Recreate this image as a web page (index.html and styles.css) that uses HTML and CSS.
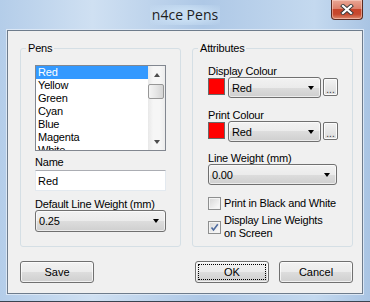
FILE: index.html
```html
<!DOCTYPE html>
<html lang="en">
<head>
  <meta charset="UTF-8">
  <title>n4ce Pens</title>
  <link rel="stylesheet" href="styles.css">
</head>
<body>
  <div class="window">
    <div class="titlebar">
      <span></span>
      <span class="title">n4ce Pens</span>
      <button class="close" aria-label="Close">
        <svg width="14" height="11" viewBox="0 0 14 11">
          <path d="M3 2 L11 9 M11 2 L3 9" stroke="#3a3a3a" stroke-width="4" stroke-linecap="square"/>
          <path d="M3 2 L11 9 M11 2 L3 9" stroke="#fff" stroke-width="2.2" stroke-linecap="square"/>
        </svg>
      </button>
    </div>

    <div class="client">
      <div class="groups">
        <fieldset class="group pens">
          <legend>Pens</legend>
          <div class="listbox">
            <ul class="items">
              <li class="selected">Red</li>
              <li>Yellow</li>
              <li>Green</li>
              <li>Cyan</li>
              <li>Blue</li>
              <li>Magenta</li>
              <li>White</li>
            </ul>
            <div class="scrollbar">
              <span class="sb-btn"><span class="tri up"></span></span>
              <span class="thumb"></span>
              <span class="sb-track"></span>
              <span class="sb-btn"><span class="tri down"></span></span>
            </div>
          </div>
          <div class="label name-label">Name</div>
          <input class="textbox" type="text" value="Red">
          <div class="label weight-label">Default Line Weight (mm)</div>
          <div class="combo wide"><span>0.25</span><span class="caret"></span></div>
        </fieldset>

        <fieldset class="group attributes">
          <legend>Attributes</legend>
          <div class="label">Display Colour</div>
          <div class="colour-row">
            <span class="swatch"></span>
            <div class="combo"><span>Red</span><span class="caret"></span></div>
            <button class="dots">...</button>
          </div>
          <div class="label print-label">Print Colour</div>
          <div class="colour-row">
            <span class="swatch"></span>
            <div class="combo"><span>Red</span><span class="caret"></span></div>
            <button class="dots">...</button>
          </div>
          <div class="label lw-label">Line Weight (mm)</div>
          <div class="combo full"><span>0.00</span><span class="caret"></span></div>
          <div class="checkrow first">
            <span class="checkbox"></span>
            <span class="nowrap">Print in Black and White</span>
          </div>
          <div class="checkrow">
            <span class="checkbox">
              <svg width="11" height="11" viewBox="0 0 11 11">
                <path d="M2.5 5.5 L4.5 8 L8.8 2.2" fill="none" stroke="#4d6a9e" stroke-width="1.6"/>
              </svg>
            </span>
            <span>Display Line Weights<br>on Screen</span>
          </div>
        </fieldset>
      </div>

      <div class="buttons">
        <button class="btn">Save</button>
        <button class="btn ok"><span class="focus">OK</span></button>
        <button class="btn">Cancel</button>
      </div>
    </div>
  </div>
</body>
</html>
```

FILE: styles.css
```css
* {
  box-sizing: border-box;
}

body {
  margin: 0;
  font-family: "Liberation Sans", Arial, sans-serif;
  font-size: 11px;
  letter-spacing: -0.2px;
  color: #000;
}

.window {
  width: 370px;
  height: 302px;
  display: flex;
  flex-direction: column;
  padding: 0 7px 7px 7px;
  background: linear-gradient(90deg, #b4cde9 0%, #cfe0f2 25%, #aec8e6 55%, #c4d9ef 85%, #a9c4e3 100%);
  border-bottom: 1px solid #3a4350;
}

/* title bar */
.titlebar {
  height: 30px;
  flex: none;
  display: grid;
  grid-template-columns: 1fr auto 1fr;
  align-items: start;
}

.title {
  margin-top: 5px;
  padding: 0 2px;
  height: 20px;
  line-height: 19px;
  font-family: "Open Sans", "Noto Sans", sans-serif;
  font-size: 14px;
  letter-spacing: 0;
  color: #1e1e1e;
  background: radial-gradient(ellipse at center, rgba(200, 222, 243, 0.95) 40%, rgba(200, 222, 243, 0) 100%);
}

.close {
  justify-self: end;
  width: 32px;
  height: 20px;
  margin: 0;
  padding: 0;
  display: flex;
  align-items: center;
  justify-content: center;
  border: 1px solid #5a2a20;
  border-top: none;
  border-radius: 0 0 4px 4px;
  background: linear-gradient(#e9a795 0%, #dd806b 45%, #c7452b 50%, #c6492e 75%, #dd8a6d 100%);
  box-shadow: inset 0 0 0 1px rgba(255, 220, 210, 0.5);
}

/* client area */
.client {
  flex: 1;
  padding: 11px 9px 0 12px;
  background: #f0f0f0;
  border: 1px solid #6e7c8c;
  box-shadow: 0 0 0 1px #dbe7f5;
}

.groups {
  display: grid;
  grid-template-columns: 161px 161px;
  column-gap: 11px;
}

.group {
  margin: 0;
  height: 205px;
  min-width: 0;
  padding: 10px 14px 0 14px;
  border: 1px solid #d5dfe5;
  border-radius: 3px;
}

.group legend {
  padding: 0 2px;
  margin-left: -9px;
  line-height: 13px;
}

.attributes {
  padding: 10px 0 0 15px;
}

.attributes legend {
  margin-left: -10px;
}

.label {
  line-height: 13px;
  height: 13px;
}

.nowrap {
  white-space: nowrap;
}

/* list box */
.listbox {
  display: flex;
  width: 131px;
  height: 86px;
  border: 1px solid #828790;
  background: #fff;
}

.items {
  list-style: none;
  margin: 0;
  padding: 0;
  flex: 1;
  overflow: hidden;
}

.items li {
  height: 13px;
  line-height: 13px;
  padding-left: 2px;
}

.items li.selected {
  background: #3399ff;
  color: #fff;
}

.scrollbar {
  width: 17px;
  display: flex;
  flex-direction: column;
  background: linear-gradient(90deg, #e8e8e8, #f6f6f6 30%, #f6f6f6 70%, #ececec);
}

.sb-btn {
  height: 17px;
  display: flex;
  align-items: center;
  justify-content: center;
}

.sb-track {
  flex: 1;
}

.thumb {
  height: 15px;
  margin: 1px 1px 0 0;
  border: 1px solid #979797;
  border-radius: 2px;
  background: linear-gradient(90deg, #f4f4f4, #e6e6e6 50%, #d4d4d4);
}

.tri {
  width: 0;
  height: 0;
  border-left: 3.5px solid transparent;
  border-right: 3.5px solid transparent;
}

.tri.up {
  border-bottom: 4px solid #4d4d4d;
}

.tri.down {
  border-top: 4px solid #4d4d4d;
}

/* text box and combos */
.name-label {
  margin-top: 5px;
}

.textbox {
  display: block;
  width: 131px;
  height: 21px;
  margin: 1px 0 0 0;
  padding: 0 2px;
  border: 1px solid #e3e9ef;
  border-top-color: #abadb3;
  font: inherit;
  color: #000;
  background: #fff;
}

.weight-label {
  margin-top: 7px;
}

.combo {
  height: 21px;
  display: flex;
  align-items: center;
  justify-content: space-between;
  padding: 0 6px 0 3px;
  border: 1px solid #707070;
  border-radius: 3px;
  background: linear-gradient(#f2f2f2 0%, #ebebeb 50%, #dddddd 50%, #cfcfcf 100%);
  box-shadow: inset 0 0 0 1px rgba(255, 255, 255, 0.6);
}

.combo.wide {
  width: 131px;
  height: 22px;
  margin-top: -1px;
}

.combo.full {
  width: 129px;
  margin-top: -1px;
}

.caret {
  width: 0;
  height: 0;
  border-left: 3.5px solid transparent;
  border-right: 3.5px solid transparent;
  border-top: 4px solid #000;
}

/* attributes */
.colour-row {
  display: flex;
  align-items: flex-start;
  margin-top: -1px;
}

.colour-row .combo {
  width: 93px;
  margin-left: 3px;
}

.swatch {
  width: 17px;
  height: 17px;
  margin-top: 1px;
  background: #ff0000;
  border: 1px solid #696969;
}

.dots {
  width: 15px;
  height: 18px;
  margin: 1px 0 0 2px;
  padding: 0;
  border: 1px solid #707070;
  border-radius: 2px;
  background: linear-gradient(#f2f2f2, #dcdcdc);
  box-shadow: inset 0 0 0 1px #fcfcfc;
  font: 10px "Liberation Sans", Arial, sans-serif;
  line-height: 22px;
  color: #333;
}

.print-label {
  margin-top: 11px;
}

.lw-label {
  margin-top: 10px;
}

.checkrow {
  display: flex;
  align-items: center;
  gap: 3px;
  margin-top: 4px;
  line-height: 13px;
}

.checkrow.first {
  margin-top: 12px;
}

.checkbox {
  width: 13px;
  height: 13px;
  flex: none;
  border: 1px solid #8e8f8f;
  background: linear-gradient(135deg, #d6d6d6, #f6f6f6 80%);
  box-shadow: inset 0 0 0 1px #f4f4f4;
}

.checkbox svg {
  display: block;
}

/* dialog buttons */
.buttons {
  display: flex;
  gap: 10px;
  margin-top: 14px;
}

.btn {
  width: 74px;
  height: 22px;
  padding: 0;
  border: 1px solid #707070;
  border-radius: 3px;
  background: linear-gradient(#f2f2f2 0%, #ebebeb 50%, #dddddd 50%, #cfcfcf 100%);
  box-shadow: inset 0 0 0 1px rgba(255, 255, 255, 0.7);
  font: inherit;
  color: #000;
}

.btn.ok {
  margin-left: auto;
  padding: 2px;
}

.focus {
  display: flex;
  height: 100%;
  align-items: center;
  justify-content: center;
  border: 1px dotted #000;
}
```
